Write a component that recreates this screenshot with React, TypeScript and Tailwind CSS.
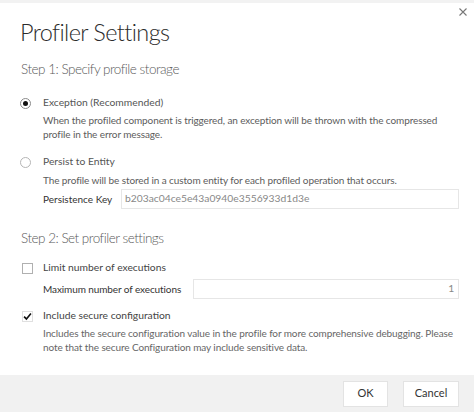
import React from "react";

const font = { fontFamily: 'Lato, "Noto Sans", sans-serif' };

function Radio({ checked }: { checked?: boolean }) {
  return (
    <div className={`w-[11px] h-[11px] rounded-full border ${checked ? "border-[#8a8a8a]" : "border-[#b5b5b5]"} flex items-center justify-center bg-white`}>
      {checked && <div className="w-[5px] h-[5px] rounded-full bg-[#111]" />}
    </div>
  );
}

function Check({ checked }: { checked?: boolean }) {
  return (
    <div className={`w-[11px] h-[11px] border ${checked ? "border-[#e0e0e0]" : "border-[#b0b0b0]"} flex items-center justify-center bg-white`}>
      {checked && (
        <svg width="10" height="9" viewBox="0 0 10 9">
          <path d="M1.2 4.6 L3.8 7.2 L8.8 1.2" fill="none" stroke="#111" strokeWidth="1.8" />
        </svg>
      )}
    </div>
  );
}

export default function App() {
  return (
    <div className="w-[474px] h-[412px] bg-white flex flex-col text-[#333]" style={font}>
      <div className="h-[3px] bg-[#f2f2f2]" />
      <div className="h-[45px] flex justify-between items-start pl-[20px]">
        <div className="mt-[14px] h-[30px] leading-[30px] text-[23.5px] font-light text-[#2b2b2b] whitespace-nowrap tracking-[-0.6px]">Profiler Settings</div>
        <svg className="mt-[5px] mr-[7px]" width="8" height="8" viewBox="0 0 8 8">
          <path d="M0.5 0.5 L7.5 7.5 M7.5 0.5 L0.5 7.5" stroke="#777" strokeWidth="1.1" />
        </svg>
      </div>
      <div className="mt-[11px] h-[20px] leading-[20px] pl-[21px] text-[13.5px] font-light text-[#5a5a5a] whitespace-nowrap tracking-[-0.5px]">Step 1: Specify profile storage</div>

      <div className="mt-[16px] h-[16px] flex items-center pl-[20px] text-[10.3px] text-[#555] whitespace-nowrap">
        <Radio checked />
        <span className="ml-[12px]">Exception (Recommended)</span>
      </div>
      <div className="mt-[2px] pl-[43px] text-[10px] leading-[14px] text-[#5c5c5c] tracking-[-0.1px]">
        <div className="whitespace-nowrap">When the profiled component is triggered, an exception will be thrown with the compressed</div>
        <div className="whitespace-nowrap">profile in the error message.</div>
      </div>

      <div className="mt-[13px] h-[16px] flex items-center pl-[20px] text-[10.3px] text-[#555] whitespace-nowrap">
        <Radio />
        <span className="ml-[12px]">Persist to Entity</span>
      </div>
      <div className="mt-[3px] pl-[43px] text-[10px] leading-[14px] text-[#5c5c5c] whitespace-nowrap tracking-[-0.1px]">
        The profile will be stored in a custom entity for each profiled operation that occurs.
      </div>
      <div className="mt-[2px] h-[20px] flex items-center pl-[43px] pr-[15px] text-[10px] whitespace-nowrap">
        <span className="w-[78px] text-[#333]">Persistence Key</span>
        <div className="flex-1 h-[20px] border border-[#e6e6e6] flex items-center pl-[3px] text-[#888] text-[10.3px]">
          b203ac04ce5e43a0940e3556933d1d3e
        </div>
      </div>

      <div className="mt-[19px] h-[20px] leading-[20px] pl-[21px] text-[13.5px] font-light text-[#5a5a5a] whitespace-nowrap tracking-[-0.5px]">Step 2: Set profiler settings</div>

      <div className="mt-[12px] h-[16px] flex items-center pl-[22px] text-[10.3px] text-[#444] whitespace-nowrap">
        <Check />
        <span className="ml-[10px]">Limit number of executions</span>
      </div>
      <div className="mt-[3px] h-[20px] flex items-center pl-[43px] pr-[15px] text-[10px] whitespace-nowrap tracking-[-0.1px]">
        <span className="w-[150px] text-[#333]">Maximum number of executions</span>
        <div className="flex-1 h-[20px] border border-[#e6e6e6] flex items-center justify-end pr-[4px] text-[#888] text-[10.3px]">1</div>
      </div>

      <div className="mt-[9px] h-[16px] flex items-center pl-[22px] text-[10.3px] text-[#444] whitespace-nowrap">
        <Check checked />
        <span className="ml-[10px]">Include secure configuration</span>
      </div>
      <div className="mt-[2px] pl-[43px] text-[10px] leading-[14px] text-[#666] tracking-[-0.1px]">
        <div className="whitespace-nowrap">Includes the secure configuration value in the profile for more comprehensive debugging. Please</div>
        <div className="whitespace-nowrap">note that the secure Configuration may include sensitive data.</div>
      </div>

      <div className="mt-auto h-[37px] bg-[#f1f1f1] flex items-center justify-end gap-[15px] pr-[15px]">
        <button className="w-[45px] h-[26px] bg-white border border-[#e3e3e3] text-[11px] text-[#333]">OK</button>
        <button className="w-[56px] h-[26px] bg-white border border-[#e3e3e3] text-[11px] text-[#333]">Cancel</button>
      </div>
    </div>
  );
}
